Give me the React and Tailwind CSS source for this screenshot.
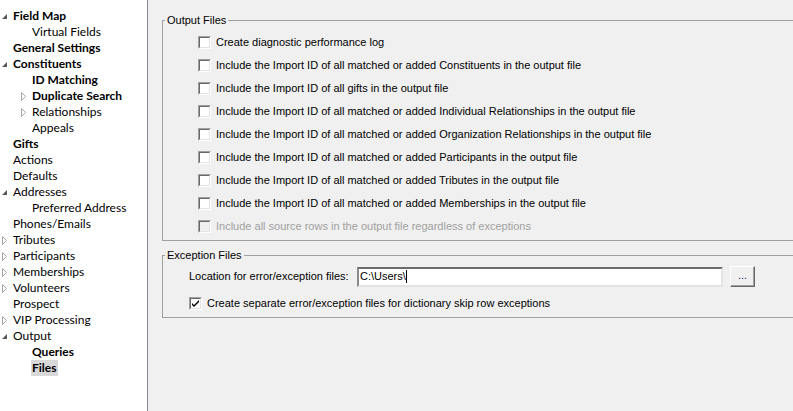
import React from 'react'

// Options tree on the left
const treeItems = [
  { label: 'Field Map', level: 0, bold: true, expander: 'open' },
  { label: 'Virtual Fields', level: 1 },
  { label: 'General Settings', level: 0, bold: true },
  { label: 'Constituents', level: 0, bold: true, expander: 'open' },
  { label: 'ID Matching', level: 1, bold: true },
  { label: 'Duplicate Search', level: 1, bold: true, expander: 'closed' },
  { label: 'Relationships', level: 1, expander: 'closed' },
  { label: 'Appeals', level: 1 },
  { label: 'Gifts', level: 0, bold: true },
  { label: 'Actions', level: 0 },
  { label: 'Defaults', level: 0 },
  { label: 'Addresses', level: 0, expander: 'open' },
  { label: 'Preferred Address', level: 1 },
  { label: 'Phones/Emails', level: 0 },
  { label: 'Tributes', level: 0, expander: 'closed' },
  { label: 'Participants', level: 0, expander: 'closed' },
  { label: 'Memberships', level: 0, expander: 'closed' },
  { label: 'Volunteers', level: 0, expander: 'closed' },
  { label: 'Prospect', level: 0 },
  { label: 'VIP Processing', level: 0, expander: 'closed' },
  { label: 'Output', level: 0, expander: 'open' },
  { label: 'Queries', level: 1, bold: true },
  { label: 'Files', level: 1, bold: true, selected: true },
]

const outputOptions = [
  { label: 'Create diagnostic performance log' },
  { label: 'Include the Import ID of all matched or added Constituents in the output file' },
  { label: 'Include the Import ID of all gifts in the output file' },
  { label: 'Include the Import ID of all matched or added Individual Relationships in the output file' },
  { label: 'Include the Import ID of all matched or added Organization Relationships in the output file' },
  { label: 'Include the Import ID of all matched or added Participants in the output file' },
  { label: 'Include the Import ID of all matched or added Tributes in the output file' },
  { label: 'Include the Import ID of all matched or added Memberships in the output file' },
  { label: 'Include all source rows in the output file regardless of exceptions', disabled: true },
]

function Expander({ type }) {
  if (type === 'open') {
    return (
      <svg width="5" height="5" viewBox="0 0 5 5">
        <path d="M5 0 L5 5 L0 5 Z" fill="#595959" />
      </svg>
    )
  }
  return (
    <svg width="5" height="9" viewBox="0 0 5 9">
      <path d="M0.5 0.5 L4.5 4.5 L0.5 8.5 Z" fill="none" stroke="#a6a6a6" strokeWidth="1" />
    </svg>
  )
}

function TreeRow({ item }) {
  return (
    <div className={`flex items-center h-4 ${item.level === 1 ? 'pl-[19px]' : 'pl-0'}`}>
      <div className="w-[13px] h-4 flex items-center pl-[2px] shrink-0">
        {item.expander && <Expander type={item.expander} />}
      </div>
      <span
        className={`leading-4 whitespace-nowrap text-black px-px -ml-px ${item.bold ? 'font-bold' : 'font-normal'} ${item.selected ? 'bg-[#d9d9d9]' : ''}`}
      >
        {item.label}
      </span>
    </div>
  )
}

function Checkbox({ checked, disabled }) {
  return (
    <div
      className={`w-[13px] h-[13px] shrink-0 border border-t-[#a0a0a0] border-l-[#a0a0a0] border-r-white border-b-white flex items-center justify-center ${disabled ? 'bg-[#f0f0f0]' : 'bg-white'}`}
    >
      <div className="w-[11px] h-[11px] border border-t-[#696969] border-l-[#696969] border-r-[#e3e3e3] border-b-[#e3e3e3] flex items-center justify-center">
        {checked && (
          <svg width="7" height="7" viewBox="0 0 7 7">
            <path d="M0 3 L0 5 L2 7 L7 2 L7 0 L2 5 Z" fill="#000" />
          </svg>
        )}
      </div>
    </div>
  )
}

function GroupBox({ title, className, children }) {
  return (
    <fieldset className={`border border-[#a0a0a0] w-[680px] ${className}`}>
      <legend className="ml-[2px] px-[2px] leading-[13px]">{title}</legend>
      {children}
    </fieldset>
  )
}

export default function App() {
  return (
    <div className="flex w-[793px] h-[411px] overflow-hidden bg-[#f0f0f0] text-[11px] font-['Liberation_Sans',Arial,sans-serif] text-black">
      {/* Tree panel */}
      <div className="w-[148px] h-full bg-white border-r border-[#828790] pt-2 text-[12px] font-['Lato','Noto_Sans',sans-serif] shrink-0">
        {treeItems.map((item) => (
          <TreeRow key={item.label} item={item} />
        ))}
      </div>

      {/* Settings panel */}
      <div className="flex-1 pl-[14px] pt-[14px] overflow-hidden">
        <GroupBox title="Output Files" className="pb-[2px]">
          <div className="pt-[4px] pl-[35px]">
            {outputOptions.map((opt) => (
              <div key={opt.label} className="flex items-center gap-[5px] h-[23px]">
                <Checkbox disabled={opt.disabled} />
                <span className={`whitespace-nowrap ${opt.disabled ? 'text-[#a0a0a0]' : 'text-black'}`}>
                  {opt.label}
                </span>
              </div>
            ))}
          </div>
        </GroupBox>

        <GroupBox title="Exception Files" className="mt-[8px] pb-[7px]">
          <div className="pt-[4px] pl-[26px]">
            <div className="flex items-center h-[21px]">
              <span className="w-[168px] whitespace-nowrap">Location for error/exception files:</span>
              <div className="w-[366px] h-[20px] bg-white border-2 border-t-[#6d6d6d] border-l-[#8a8a8a] border-r-[#e3e3e3] border-b-[#e3e3e3] flex items-center px-[1px]">
                <span>C:\Users\</span>
                <span className="w-px h-[13px] bg-black" />
              </div>
              <div className="ml-[7px] w-[25px] h-[21px] bg-[#f0f0f0] border border-t-white border-l-white border-r-[#696969] border-b-[#696969] shadow-[inset_-1px_-1px_0_#a0a0a0] flex items-center justify-center text-[#1a1a6a] leading-none pb-[3px]">
                ...
              </div>
            </div>
            <div className="flex items-center gap-[5px] h-[13px] mt-[10px]">
              <Checkbox checked />
              <span className="whitespace-nowrap">Create separate error/exception files for dictionary skip row exceptions</span>
            </div>
          </div>
        </GroupBox>
      </div>
    </div>
  )
}
